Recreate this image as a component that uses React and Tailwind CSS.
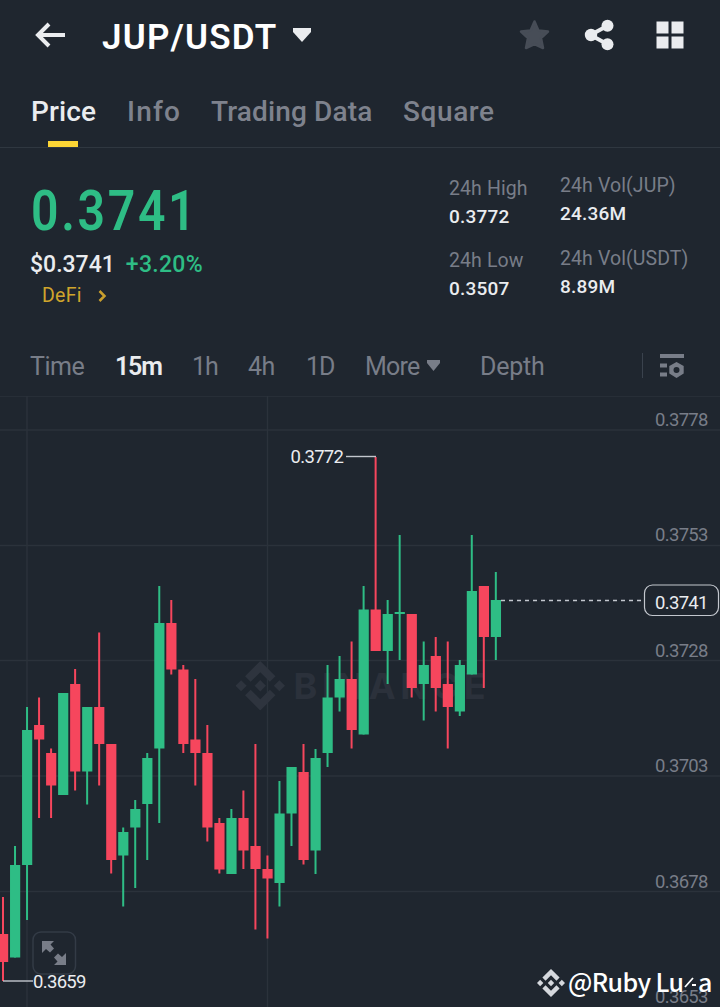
const TABS = [
  { label: 'Price', className: 'w-[96px] text-[#eaecef] tracking-[0.15px]' },
  { label: 'Info', className: 'w-[84px] tracking-[1.2px]' },
  { label: 'Trading Data', className: 'w-[192px] tracking-[0.15px]' },
  { label: 'Square', className: 'tracking-[0.6px]' }
];

const UP = '#2ebd85';
const DOWN = '#f6465d';
const FIRST_X = 3;
const STEP_X = 12.02;

// [color, high, body top, body bottom, low]
const CANDLES = [
  [DOWN, 897, 934, 962, 981],
  [UP, 846, 865, 957.5, 957.5],
  [UP, 707, 730, 865, 920],
  [DOWN, 697.5, 725, 739.5, 818],
  [DOWN, 748.5, 753, 785.5, 818],
  [UP, 693, 693, 795, 795],
  [DOWN, 669, 684, 771.5, 790.5],
  [UP, 707, 707, 771.5, 804.5],
  [DOWN, 632.5, 707, 744, 785.5],
  [DOWN, 744, 744, 860, 873.5],
  [UP, 827.5, 832, 855.5, 906.5],
  [UP, 800, 809, 827.5, 888],
  [UP, 753, 758, 804, 860],
  [UP, 586, 623, 748.5, 823],
  [DOWN, 600, 623, 669.5, 674.5],
  [DOWN, 665, 669.5, 744, 753],
  [DOWN, 679, 739.5, 753, 785.5],
  [DOWN, 725, 753, 827.5, 841.5],
  [DOWN, 818, 823, 869.5, 873.5],
  [UP, 809, 818, 874, 874],
  [DOWN, 790.5, 818, 850.5, 869],
  [DOWN, 744, 846, 869, 929.5],
  [DOWN, 855.5, 869, 878.5, 938.5],
  [UP, 781, 813.5, 883, 906.5],
  [UP, 767, 767, 813.5, 846],
  [DOWN, 744, 772, 860, 864.5],
  [UP, 749, 758, 850.5, 874],
  [UP, 665, 697.5, 753, 767],
  [UP, 656, 679, 697.5, 711.5],
  [DOWN, 641.5, 679, 730, 748.5],
  [UP, 586, 609.5, 734.5, 734.5],
  [DOWN, 457, 609.5, 651, 651],
  [UP, 600, 614, 651, 684],
  [UP, 535, 612, 614, 660],
  [DOWN, 614, 614, 688, 697.5],
  [UP, 641.5, 665, 684, 720.5],
  [DOWN, 637, 656, 688, 711.5],
  [DOWN, 641.5, 684, 707, 748.5],
  [UP, 660, 665, 711.5, 716],
  [UP, 535, 591, 674.5, 674.5],
  [DOWN, 586, 586, 637, 688],
  [UP, 572, 600, 637, 660]
];

const GRID_Y = [396, 430, 545.5, 660.5, 776, 891.5];
const GRID_X = [27, 267.5];

const PRICE_LABELS = [
  ['0.3778', 426],
  ['0.3753', 541],
  ['0.3728', 657],
  ['0.3703', 772],
  ['0.3678', 888],
  ['0.3653', 1003]
];

function BinanceMark({ x = 0, y = 0, size, fill }) {
  return (
    <svg x={x} y={y} width={size} height={size} viewBox="0 0 126.6 126.6" fill={fill}>
      <path d="M38.7 53.2 63.3 28.6 87.9 53.2 102.2 38.9 63.3 0 24.4 38.9z" />
      <path d="M0 63.3 14.3 49 28.6 63.3 14.3 77.6z" />
      <path d="M38.7 73.4 63.3 98 87.9 73.4 102.2 87.7 63.3 126.6 24.4 87.7z" />
      <path d="M98 63.3 112.3 49 126.6 63.3 112.3 77.6z" />
      <path d="M63.3 48.8 77.8 63.3 63.3 77.8 48.8 63.3z" />
    </svg>
  );
}

function Header() {
  return (
    <header className="flex h-[72px] items-center pl-[34px]">
      <svg className="mt-[-2px]" width="32" height="26" viewBox="0 0 32 26" fill="none" stroke="#eaecef" strokeWidth="4">
        <path d="M31 13H4M15 2 4 13l11 11" />
      </svg>
      <h1 className="ml-[36px] w-[191px] whitespace-nowrap pt-[3px] text-[35px] font-semibold leading-10 tracking-[1.2px] text-white">
        JUP/USDT
      </h1>
      <svg className="mt-[-3px]" width="18" height="14" viewBox="0 0 18 14" fill="#eaecef">
        <path d="M0 0h18v4l-9 10L0 4z" />
      </svg>
      <svg className="ml-[208px] mt-[-2px]" width="31" height="32" viewBox="0 0 31 32">
        <path
          d="M15.5 2.500 19.4 11.500 29 12.500 22 19 24 29 15.500 25 7 29 9 19 2 12.500 11.6 11.500z"
          fill="#474d57"
          stroke="#474d57"
          strokeWidth="2.5"
          strokeLinejoin="round"
        />
      </svg>
      <svg className="ml-[34px] mt-[-2px]" width="30" height="32" viewBox="0 0 30 32" fill="#eaecef">
        <path d="M23 7 6.500 16 23 25" fill="none" stroke="#eaecef" strokeWidth="4" />
        <circle cx="23.500" cy="6.800" r="6" />
        <circle cx="7" cy="16" r="6.200" />
        <circle cx="23.500" cy="25.200" r="6" />
      </svg>
      <svg className="ml-[42px] mt-[-2px]" width="28" height="28" viewBox="0 0 28 28" fill="#eaecef">
        <path d="M.5.500H12.500V12.500H.5zM15.500.500H27.500V12.500H15.500zM.5 15.500H12.500V27.500H.5zM15.500 15.500H27.500V27.500H15.500z" />
      </svg>
    </header>
  );
}

function Tabs() {
  return (
    <nav className="flex h-[76px] flex-col justify-between border-b border-[#2f3740] pl-[31px] pt-[22px]">
      <div className="flex whitespace-nowrap text-[28px] font-medium leading-9 text-[#7e828d]">
        {TABS.map((tab) => (
          <span key={tab.label} className={tab.className}>
            {tab.label}
          </span>
        ))}
      </div>
      <div className="ml-[17px] h-1.5 w-[30px] bg-[#fcd535]" />
    </nav>
  );
}

function Stat({ label, value, className = '' }) {
  return (
    <div className={`h-[72px] whitespace-nowrap ${className}`}>
      <div className="text-[19.5px] leading-[28px] tracking-[0.1px] text-[#787d88]">{label}</div>
      <div className="text-[19px] font-medium leading-[28px] tracking-[0.2px] text-[#eaecef]">{value}</div>
    </div>
  );
}

function Summary() {
  return (
    <section className="flex h-[187px] pl-[31px]">
      <div className="w-[418px] whitespace-nowrap pt-[33px]">
        <div className="origin-left scale-x-[0.86] text-[56px] font-semibold leading-[60px] tracking-[3.1px] text-[#2ebd85]">
          0.3741
        </div>
        <div className="mt-[8px] flex gap-[11px] text-[23px] font-medium leading-8">
          <span className="ml-[-1px] text-[#eaecef]">$0.3741</span>
          <span className="tracking-[0.3px] text-[#2ebd85]">+3.20%</span>
        </div>
        <div className="flex items-center pl-[11px] text-[19.500px] leading-[30px] text-[#d0a52c]">
          <span className="w-[56px] tracking-[0.3px]">DeFi</span>
          <svg width="9" height="12" viewBox="0 0 9 12" fill="none" stroke="#c99f2d" strokeWidth="2.500">
            <path d="m1.500 1 5 5-5 5" />
          </svg>
        </div>
      </div>
      <div className="w-[111px] pt-[27px]">
        <Stat label="24h High" value="0.3772" />
        <Stat label="24h Low" value="0.3507" />
      </div>
      <div className="pt-[24px]">
        <Stat label="24h Vol(JUP)" value="24.36M" className="mb-px" />
        <Stat label="24h Vol(USDT)" value="8.89M" />
      </div>
    </section>
  );
}

function Intervals() {
  return (
    <div className="flex h-[61px] items-center whitespace-nowrap pl-[30px] pt-[3px] text-[25px] text-[#787d88]">
      <span className="w-[85px] tracking-[-0.5px]">Time</span>
      <span className="w-[77px] font-semibold tracking-[-1.2px] text-[#eaecef]">15m</span>
      <span className="w-[56px] tracking-[-1px]">1h</span>
      <span className="w-[58px] tracking-[-0.5px]">4h</span>
      <span className="w-[59px] tracking-[-1px]">1D</span>
      <span className="w-[62px] tracking-[-0.8px]">More</span>
      <svg className="mt-[-4px]" width="13" height="11" viewBox="0 0 13 11" fill="#787d88">
        <path d="M0 0h13v3L6.500 11 0 3z" />
      </svg>
      <span className="ml-[40px] w-[162px] tracking-[-0.2px]">Depth</span>
      <span className="mt-[-4px] h-[25px] w-px bg-[#3a424d]" />
      <svg className="ml-[17px] mt-[-2px]" width="24" height="24" viewBox="0 0 24 24" fill="#787d88">
        <path d="M0 0h24v4H0zM0 9.500h7v4H0zM0 18.500h7v4H0z" />
        <path
          fillRule="evenodd"
          d="m16.500 8 7.200 4v7.600L16.500 24l-7.200-4.400V12zM16.500 13a3 3 0 1 0 0 6 3 3 0 0 0 0-6z"
        />
      </svg>
    </div>
  );
}

function Chart() {
  return (
    <svg className="block" width="720" height="611" viewBox="0 396 720 611" fontFamily="Roboto, sans-serif">
      <g stroke="#2b323b" strokeWidth="1.4">
        {GRID_Y.map((y) => (
          <line key={y} x1="0" x2="720" y1={y} y2={y} />
        ))}
        {GRID_X.map((x) => (
          <line key={x} x1={x} x2={x} y1="396" y2="1007" />
        ))}
      </g>

      <BinanceMark x={235.500} y={661} size={49.500} fill="#2e343e" />
      <text x="293.500" y="699" fontSize="36" fontWeight="700" fontFamily="Inter, sans-serif" fill="#2b313b" textLength="192">
        BINANCE
      </text>

      {CANDLES.map(([color, high, top, bottom, low], i) => {
        const x = FIRST_X + i * STEP_X;
        return (
          <g key={i} fill={color}>
            <rect x={x - 1} y={high} width="2" height={low - high} />
            <rect x={x - 5} y={top} width="10.200" height={bottom - top} />
          </g>
        );
      })}

      <g stroke="#c3c7ce" strokeWidth="1.4">
        <line x1="346" x2="376" y1="456.500" y2="456.500" />
        <line x1="3" x2="33" y1="981" y2="981" />
        <line x1="501" x2="643" y1="600.500" y2="600.500" strokeDasharray="4 4" />
      </g>

      <g fontSize="18.500" fill="#787d88">
        {PRICE_LABELS.map(([label, y]) => (
          <text key={label} x="655" y={y} textLength="53.500">
            {label}
          </text>
        ))}
      </g>
      <rect x="644.500" y="585" width="74" height="30.500" rx="8" fill="#1f262f" stroke="#c3c7ce" strokeWidth="1.2" />
      <g fontSize="18.500" fill="#eaecef">
        <text x="655" y="609" textLength="53.500">0.3741</text>
        <text x="290.500" y="463" textLength="53.500">0.3772</text>
        <text x="33" y="988" textLength="53.500">0.3659</text>
      </g>

      <rect x="33" y="932" width="42.500" height="42" rx="8" fill="none" stroke="#333b46" strokeWidth="1.5" />
      <g fill="#787d88">
        <path d="M42 941H54L50.500 944.500 54 948.500 50 952.500 46 949 42 953z" />
        <path d="M66 965H54L57.500 961.500 54 957.500 58 953.500 62 957 66 953z" />
      </g>

      <BinanceMark x={537} y={969} size={28} fill="#d5d8dd" />
      <g fontSize="25" fontWeight="500" fill="#fff" fontFamily="'Noto Sans CJK SC', sans-serif">
        <text x="568" y="992" textLength="116">@Ruby Lu</text>
        <text x="698" y="992">a</text>
      </g>
      <path d="m685 987 8-9M692 985h4" stroke="#fff" strokeWidth="1.800" />
    </svg>
  );
}

export default function App() {
  return (
    <main className="h-[1007px] w-[720px] overflow-hidden bg-[#1f262f] font-['Roboto',sans-serif]">
      <Header />
      <Tabs />
      <Summary />
      <Intervals />
      <Chart />
    </main>
  );
}
